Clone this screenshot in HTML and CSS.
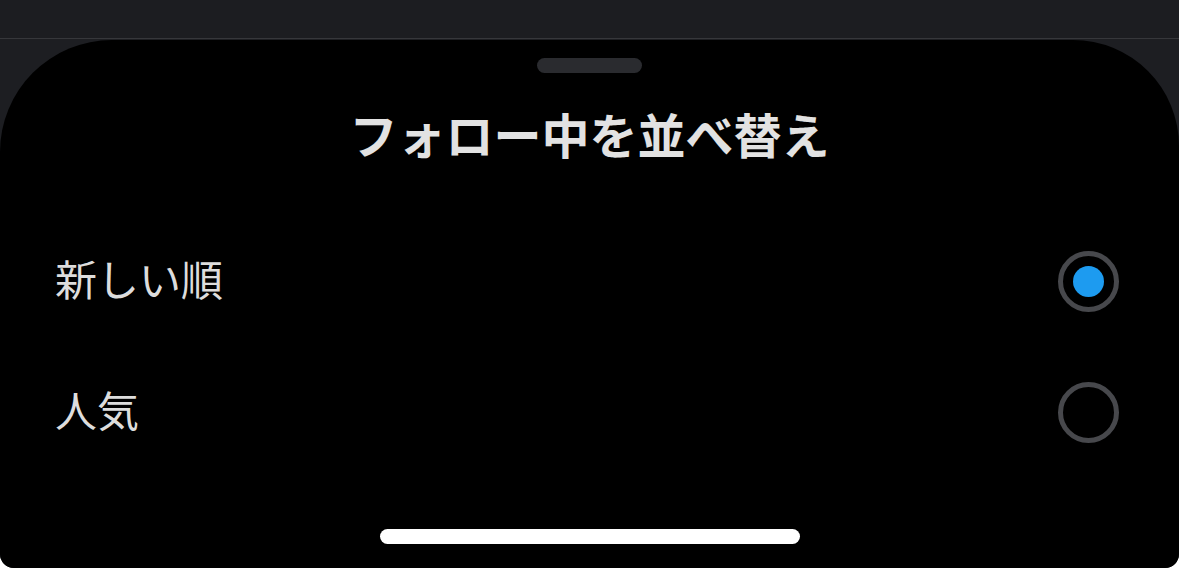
FILE: index.html
```html
<!DOCTYPE html>
<html lang="ja">
<head>
<meta charset="utf-8">
<link rel="stylesheet" href="styles.css">
</head>
<body>
<div class="screen">
  <div class="topbar"></div>
  <div class="sheet">
    <div class="handle"></div>
    <h1 class="title">フォロー中を並べ替え</h1>
    <div class="options">
      <div class="option">
        <span class="label">新しい順</span>
        <span class="radio checked"><span class="dot"></span></span>
      </div>
      <div class="option">
        <span class="label">人気</span>
        <span class="radio"></span>
      </div>
    </div>
    <div class="home-indicator"></div>
  </div>
</div>
</body>
</html>
```

FILE: styles.css
```css
html, body {
  margin: 0;
  padding: 0;
  background: #ffffff;
}
body {
  font-family: "Noto Sans CJK JP", "Noto Sans", sans-serif;
}
.screen {
  width: 1179px;
  height: 568px;
  background: #1d1e22;
  border-radius: 0 0 14px 14px;
  overflow: hidden;
  display: flex;
  flex-direction: column;
}
.topbar {
  height: 38px;
  flex: none;
  background: #1c1d21;
  border-bottom: 1px solid #36373b;
}
.sheet {
  margin-top: 1px;
  flex: 1;
  background: #000000;
  border-radius: 112px 106px 0 0;
  display: flex;
  flex-direction: column;
  align-items: stretch;
}
.handle {
  align-self: center;
  width: 105px;
  height: 15px;
  border-radius: 8px;
  background: #2a2b2f;
  margin-top: 18px;
}
.title {
  margin: 31px 0 0;
  text-align: center;
  font-size: 48px;
  line-height: 58px;
  font-weight: 700;
  color: #e2e2e2;
}
.options {
  margin-top: 54px;
  display: flex;
  flex-direction: column;
}
.option {
  height: 131px;
  display: flex;
  align-items: center;
  justify-content: space-between;
  padding: 0 60px 0 55px;
}
.label {
  font-size: 42px;
  line-height: 50px;
  padding-bottom: 8px;
  color: #dddddd;
}
.radio {
  box-sizing: border-box;
  width: 61px;
  height: 61px;
  border: 5px solid #47484c;
  border-radius: 50%;
  display: flex;
  align-items: center;
  justify-content: center;
}
.dot {
  width: 31px;
  height: 31px;
  border-radius: 50%;
  background: #1d9bf0;
}
.home-indicator {
  margin-top: auto;
  margin-bottom: 24px;
  align-self: center;
  width: 420px;
  height: 15px;
  border-radius: 8px;
  background: #ffffff;
}
```
